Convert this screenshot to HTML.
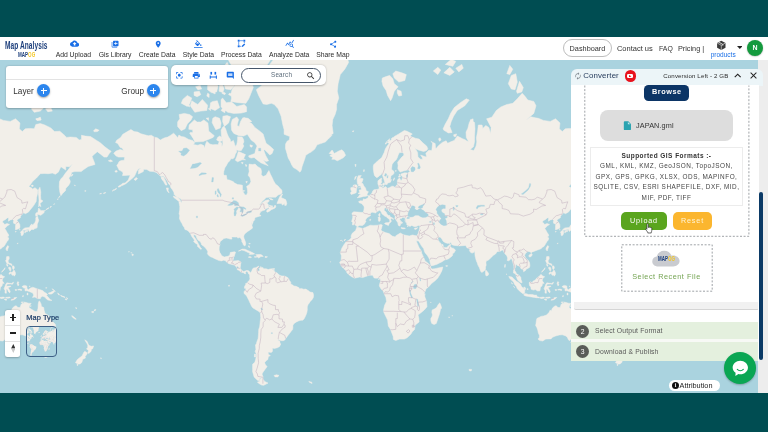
<!DOCTYPE html>
<html lang="en"><head><meta charset="utf-8"><title>Map Analysis - Converter</title>
<style>
*{box-sizing:border-box;margin:0;padding:0}
html,body{width:768px;height:432px;overflow:hidden;background:#004d52;font-family:"Liberation Sans",sans-serif;color:#222}
#stage{position:absolute;left:0;top:0;width:768px;height:432px;overflow:hidden;background:#004d52}
#nav{position:absolute;left:0;top:37.400px;width:768px;height:22.400px;background:#fff}
#map{position:absolute;left:0;top:59.700px;width:758px;height:333.300px;background:#aad3df;overflow:hidden}
#map>svg{position:absolute;left:0;top:-59.700px;filter:blur(.3px)}
#track{position:absolute;left:758px;top:59.7px;width:10px;height:333.3px;background:#ededed}
.abs{position:absolute}

.t{position:absolute;white-space:nowrap;line-height:1}
#stage{will-change:transform}
.c{transform:translateX(-50%)}
.mi{position:absolute;top:51.700px;font-size:6.8px;color:#2b2b2b;white-space:nowrap;line-height:1;transform:translateX(-50%)}
.ic{position:absolute;fill:#1a6fe6}
.rn{position:absolute;top:44.6px;font-size:7.3px;color:#333;white-space:nowrap;line-height:1}
.card{position:absolute;background:#fff;border-radius:3px;box-shadow:0 0.5px 2px rgba(0,0,0,.25)}
.plus{position:absolute;width:13px;height:13px;border-radius:50%;background:#2c86ee;box-shadow:0 1px 2px rgba(0,0,0,.35)}
.plus:before{content:"";position:absolute;left:3.4px;top:5.95px;width:6.2px;height:1.1px;background:#fff}
.plus:after{content:"";position:absolute;left:5.95px;top:3.4px;width:1.1px;height:6.2px;background:#fff}
.fmt{position:absolute;left:590px;top:147px;width:153px;height:58.5px;border:0.6px solid #ececec;text-align:center;font-size:6.4px;letter-spacing:.5px;color:#454545;line-height:10.5px;padding-top:2.9px;white-space:nowrap}
.fmt b{color:#333;letter-spacing:.45px;font-size:6.5px}
.btn{position:absolute;border-radius:5px;color:#fff;font-size:7.2px;letter-spacing:.85px;text-align:center;line-height:17px;height:17.5px;top:212px}
.step{position:absolute;left:570.5px;width:187.5px;background:#e4f0de}
.step i{position:absolute;left:5.7px;width:13px;height:13px;border-radius:50%;background:#595c58;color:#fff;font-style:normal;font-size:6.8px;text-align:center;line-height:13px}
.step span{position:absolute;left:24.5px;font-size:6.8px;color:#5a5a5a;letter-spacing:.15px;line-height:1}
</style></head><body>
<div id="stage">
<div id="nav"></div>
<div class="t" style="left:5.2px;top:40.500px;font-size:10.2px;font-weight:bold;color:#1d3f7c;transform:scaleX(.645);transform-origin:0 0;letter-spacing:.1px">Map Analysis</div>
<div class="t" style="left:17.6px;top:51.500px;font-size:6.700px;font-weight:bold;color:#1d3f7c;transform:scaleX(.68);transform-origin:0 0">MAP<span style="color:#f3c623">OG</span></div>
<svg class="ic" style="left:69.500px;top:39.300px" width="9.200" height="9.200" viewBox="0 0 24 24"><path d="M19.35 10.04C18.67 6.59 15.64 4 12 4 9.11 4 6.6 5.64 5.35 8.04 2.34 8.36 0 10.91 0 14c0 3.31 2.69 6 6 6h13c2.76 0 5-2.24 5-5 0-2.64-2.05-4.78-4.65-4.96zM14 13v4h-4v-4H7l5-5 5 5h-3z"/></svg>
<div class="mi" style="left:73.4px">Add Upload</div>
<svg class="ic" style="left:111.4px;top:40px" width="8.2" height="8.2" viewBox="0 0 24 24"><path d="M4 6H2v14c0 1.100.9 2 2 2h14v-2H4V6zm16-4H8c-1.100 0-2 .9-2 2v12c0 1.100.9 2 2 2h12c1.100 0 2-.9 2-2V4c0-1.100-.9-2-2-2zm-1 9h-4v4h-2v-4H9V9h4V5h2v4h4v2z"/></svg>
<div class="mi" style="left:115.1px">Gis Library</div>
<svg class="ic" style="left:154px;top:39.8px" width="8.4" height="8.4" viewBox="0 0 24 24"><path d="M12 2C8.13 2 5 5.13 5 9c0 5.250 7 13 7 13s7-7.750 7-13c0-3.870-3.130-7-7-7zm0 9.500c-1.380 0-2.500-1.120-2.500-2.500s1.120-2.500 2.500-2.500 2.500 1.120 2.500 2.500-1.120 2.500-2.500 2.500z"/></svg>
<div class="mi" style="left:157.1px">Create Data</div>
<svg class="ic" style="left:194.3px;top:39.6px" width="8.6" height="8.6" viewBox="0 0 24 24"><path d="M16.560 8.940L7.620 0 6.210 1.410l2.380 2.380-5.150 5.150c-.59.59-.59 1.540 0 2.120l5.500 5.500c.29.29.68.44 1.060.44s.77-.15 1.060-.44l5.500-5.500c.59-.58.59-1.530 0-2.120zM5.210 10L10 5.210 14.790 10H5.210zM19 11.500s-2 2.170-2 3.500c0 1.100.9 2 2 2s2-.9 2-2c0-1.330-2-3.500-2-3.500zM0 20h24v3.500H0z"/></svg>
<div class="mi" style="left:198.4px">Style Data</div>
<svg class="ic" style="left:237.400px;top:39.400px;fill:none;stroke:#1a6fe6;stroke-width:1.700" width="9" height="9" viewBox="0 0 24 24"><path d="M4.500 7V17M7 4.500H17M19.500 7V11M7 19.500H11"/><g fill="#1a6fe6" stroke="none"><rect x="2" y="2" width="5" height="5"/><rect x="17" y="2" width="5" height="5"/><rect x="2" y="17" width="5" height="5"/><path d="M12.500 21.500l.6-3.200 6.200-6.200 2.600 2.600-6.200 6.200z"/></g></svg>
<div class="mi" style="left:241.4px">Process Data</div>
<svg class="ic" style="left:284.900px;top:39.300px" width="9.400" height="9.400" viewBox="0 0 24 24"><path d="M19.880 18.470c.44-.7.7-1.510.7-2.390 0-2.490-2.010-4.500-4.500-4.500s-4.500 2.010-4.500 4.500 2.010 4.500 4.490 4.500c.88 0 1.700-.26 2.390-.7L21.580 23 23 21.580l-3.120-3.110zm-3.800.11c-1.380 0-2.500-1.120-2.500-2.500s1.120-2.500 2.500-2.500 2.500 1.120 2.500 2.500-1.120 2.500-2.500 2.500zm-.36-8.500c-.74.020-1.450.18-2.100.45l-.55-.83-3.800 6.180-3.010-3.520-3.630 5.810L1 17l5-8 3 3.500L13 6l2.720 4.080zm2.590.5c-.64-.28-1.330-.45-2.050-.49L21.380 2 23 3.180l-4.690 7.400z"/></svg>
<div class="mi" style="left:289.2px">Analyze Data</div>
<svg class="ic" style="left:329.2px;top:39.6px" width="8.4" height="8.4" viewBox="0 0 24 24"><path d="M18 16.080c-.76 0-1.440.3-1.960.77L8.910 12.700c.05-.23.090-.46.090-.7s-.040-.47-.090-.7l7.050-4.110c.54.5 1.250.81 2.040.81 1.660 0 3-1.340 3-3s-1.340-3-3-3-3 1.340-3 3c0 .24.040.47.090.7L8.040 9.810C7.500 9.310 6.790 9 6 9c-1.660 0-3 1.340-3 3s1.340 3 3 3c.79 0 1.500-.31 2.040-.81l7.120 4.160c-.5.21-.8.43-.8.650 0 1.610 1.310 2.920 2.920 2.920 1.610 0 2.920-1.310 2.920-2.920s-1.310-2.920-2.920-2.920z"/></svg>
<div class="mi" style="left:332.9px">Share Map</div>
<div class="abs" style="left:563px;top:39.4px;width:48.6px;height:17.4px;border:0.7px solid #bdbdbd;border-radius:9px"></div>
<div class="rn" style="left:569.6px">Dashboard</div>
<div class="rn" style="left:616.9px;font-size:7.5px">Contact us</div>
<div class="rn" style="left:659px;font-size:6.9px;top:45.700px">FAQ</div>
<div class="rn" style="left:677.9px">Pricing |</div>
<svg class="abs" style="left:715.600px;top:39.700px" width="10.600" height="10.600" viewBox="0 0 24 24"><path fill="#3a3a3a" d="M12 1.500L2.500 6.700v10.600L12 22.500l9.500-5.200V6.700z"/><path fill="none" stroke="#e8e8e8" stroke-width="1.400" d="M2.500 6.700L12 12l9.500-5.300M12 12v10.500"/><path fill="#d9d9d9" d="M7 4.200l9.500 5.300v3.200l-1.800 1V10.600L5.200 5.200z"/></svg>
<div class="t c" style="left:723.2px;top:51.600px;font-size:6.500px;color:#1a6fe6">products</div>
<svg class="abs" style="left:736.6px;top:45.8px" width="5.6" height="3" viewBox="0 0 10 5"><path d="M0 0h10L5 5z" fill="#222"/></svg>
<div class="abs" style="left:746.6px;top:39.6px;width:16.8px;height:16.8px;border-radius:50%;background:#149a3e;color:#fff;font-size:7px;font-weight:bold;text-align:center;line-height:16.8px;box-shadow:0 .5px 1.500px rgba(0,0,0,.3)">N</div>

<div id="map">
<svg width="768" height="432" viewBox="0 0 768 432">
<defs><g id="world">
<path fill="#f2efe9" stroke="#f2efe9" stroke-width="0.5" stroke-linejoin="round" d="M113.7 153.2L116.1 151L120.1 149.5L123.6 150.6L122.1 147.9L120.3 147.6L117.7 143.6L115.6 142.6L116.5 140.4L120.6 137.4L122.8 134.3L126.6 132.1L130.9 129.5L134.1 131.6L137.8 132.1L140.8 133.7L144.6 134.8L148.3 135.7L151.3 135.2L154.3 137.2L157.3 137.8L160.3 140.1L162.6 138.7L164.8 137.8L167.8 137L170.8 135.2L173.5 133.2L175.3 134.8L177.6 137.8L178.9 135L181.3 136.5L184.3 137L188.8 139.5L192.6 140.4L194.8 142.8L193.3 144.6L197.8 145.2L200.8 144.2L203.8 145.6L204.6 148.3L205.3 144.8L206.8 141.2L209.8 144L212.8 144.8L215.8 144.6L218.1 144.8L218.8 142.4L219.6 141.8L221.8 143L221.8 146.8L222.9 144L222.6 140.4L221.4 135.7L221.1 130.2L223 126.7L224.1 126.4L225.6 128.8L227.1 133.4L228.6 137L230.1 139.1L230.8 142L233.4 140.4L235.3 146.4L236.8 144.4L237.6 139.9L237.6 136.7L242.1 137L243.6 139.5L243.9 142L242.8 144L243.9 146L241.3 150.6L239.1 150.8L236.5 149.8L236.8 151.7L235.3 154.3L234.6 157.1L233.1 158.8L230.8 158.8L229.8 160.8L227.8 162.8L226.3 165.7L224.8 167.9L223.8 171.6L223.6 174.6L224.5 175.3L226.3 175.3L227.1 179.7L229.3 180L233.1 181.6L234.6 183L237.6 184.5L241.3 184.9L242.4 185.2L242.5 188.2L242.5 190.7L243.6 192.7L245.1 194.9L246.6 194.9L247.6 192.4L247.3 188.7L246.6 186.4L249.6 184.3L250.9 181.6L250 177.7L248.1 175.2L249.2 171.6L248.8 167.9L249.1 164.1L252.6 164.5L255.1 164.1L257.8 166.7L260.8 168.4L261.6 171.6L261.2 174.6L263.1 176.6L266.1 175.2L267.6 172.5L268.9 170.6L270.6 174.6L272.1 177.4L273.6 180.8L275.4 184L278.1 186.1L279.6 187.9L281.8 190L282.1 192.4L281.1 194.1L278.1 195.1L275.8 197.2L272.8 197.2L269.1 197.2L266.1 197.5L264.6 199.3L262.3 201.2L260.1 204.3L259 205.1L260.8 204.7L262.3 202.7L265.3 200.5L268.3 199.8L269.4 200.7L267.9 202.5L266.4 202.4L268.3 204.5L268.6 206.5L269.8 206.9L271.3 207.3L273.6 207.6L275.1 205L276 206.9L274.3 208.4L271.3 209.7L269.1 211.4L267.2 212.2L266.5 211.2L267.1 209.9L269.1 208.6L268.6 207.6L266.8 208.6L265.3 209.1L265 209.9L263.1 210.5L260.8 211.6L259.9 213.2L259.6 214.2L259.9 215.3L260.8 215.3L260.8 215.9L259.3 216.3L257.8 216.7L255.2 217.5L254.8 218.1L254.8 219.6L253.6 221.2L252.6 220.4L253.2 221.9L252.4 223.9L251.8 225L251.4 223.1L251.2 220.8L251.1 224L251.9 225.2L252.6 228.1L251.1 229.2L248.9 230.7L247.3 231.8L245.8 233L244.3 234.4L243.7 236.4L244 238.3L244.9 240.3L245.7 242.9L245.5 245.2L244.9 245.8L244.2 245.8L243.2 244.6L242.8 243.2L241.8 241.7L241.8 240.2L240.9 238.5L239.8 237.5L237.9 238.1L236.8 237.1L234.6 237.1L232.4 236.9L231.6 237.4L232 239.1L230.1 239.1L228.6 238.5L226.3 238L223.8 238.6L222.6 239.8L220.3 241.4L219.7 243.6L220 244.6L219.2 246.9L219.1 250.1L219.9 252.6L221.1 254.5L221.8 255.8L223.3 256.4L224.4 257L226.3 256.6L228.1 256.3L229.3 255.4L230.1 254.2L230.2 252.6L232.3 252.1L234.6 251.8L235.6 252.2L234.9 254.2L234.2 256.6L233.5 257.3L233.5 258.9L232.6 260.6L233.8 260.9L236.1 260.8L238.3 260.6L240.7 261.7L241.1 262L240.6 264.4L240.4 266.2L240.2 268.2L241.3 269.7L242.5 270.9L243.6 271.5L245.1 271.1L246.4 270.5L248.1 270.6L249.7 271.8L248.9 274L248.2 272.8L247.3 271.4L246.6 271.3L245.4 272.3L245.8 273.5L245.2 273.9L244.3 273.4L243.2 272.6L241.6 272.5L240.6 272L240.2 271.2L238.8 270.3L237.2 269.7L237.2 268L235.8 266.4L234.6 265.1L233.1 264.8L231.1 264.3L228.9 263.7L227.4 262.7L225.1 260.6L223.6 260.2L221.5 260.9L219.1 260.6L216.6 259.5L214.3 258.4L212.5 257.4L210.4 256.7L208.3 255.1L207.4 253.5L207.9 251.8L206.8 249.7L205.3 247.7L203.1 245.7L201.7 244.9L201.1 243L199.9 241.2L198.1 240.2L196.6 237.8L196 235.5L193.6 234.4L193.8 236.4L195.4 238.6L196.8 240.7L198.2 243.4L199.6 246.1L200.4 247.4L201.6 248.8L200.8 249.5L199.4 248L197.5 246.4L197.5 244.4L195.4 243.2L193.6 241.4L194.5 240.2L193.3 238.5L191.8 236.5L190.8 234.4L190 233L188.2 230.9L186.6 230L184.9 229.5L184.3 227.6L182.8 225.5L182.1 223.7L181.3 222.5L180.1 220.2L179.4 218.4L179.7 215.7L179.1 213.6L179.7 210.1L179.8 206.5L178.8 201.6L181.3 202.1L182.1 203.6L181.6 200.2L180.9 199.1L178.6 197.7L176.1 196.5L174.2 194.6L173.9 192.4L172.6 190L170.8 187.7L170.3 185.6L168.6 184L167.5 181.3L165.3 178L163.3 176L161.1 176.6L158.8 174.6L156.3 172.5L153.6 171.6L149.8 171.3L146.8 169.5L143.8 169.2L143.3 171.6L141.6 172.5L138.3 174L138.6 170.1L140.8 167.9L138.3 168.9L136.6 171.6L135.6 173.7L134.5 176.3L131.8 178.8L128.8 181.3L125.8 183.8L122.8 185.3L120.6 186.1L118.6 186.6L121.3 184.5L122.8 183.2L125.1 183L128.1 180.2L129.6 176.6L130.3 175.2L128.1 175.2L125.1 175.4L122.5 175.6L123.1 173.1L122.1 171.6L119.1 170.1L117.6 167L116.8 165.4L118.3 163.2L119.1 161.5L121.3 160.5L124.3 160.2L124.6 157.1L122.1 157.1L118.3 157.1L116.1 156ZM300 172.2L296.8 169.5L293.4 167.6L291.6 164.8L290.1 161.2L288.2 158.1L287.1 153.9L285.4 148.3L285.6 144L287.1 141.2L289.3 139.9L289.8 136.5L284.1 134.3L284.1 129.8L282.6 124L281.1 116.2L278.1 108.8L274.3 104.5L271.3 103.3L266.8 104.5L263.1 103.9L258.6 95.4L256.3 89.7L263.8 83.7L268.3 79.6L268.3 75.4L264.6 71.9L269.8 64.4L275.1 57.2L283.3 52.9L290.8 51.7L298.3 47.1L305.8 40.9L316.3 36.9L325.3 42.2L332.8 48.3L335.8 56.2L347.8 59.3L348.6 62.4L344.8 69.2L340.3 74.6L338.1 83.7L337.3 91.2L338.8 98.1L336.6 104.5L336.6 109.4L335.1 114.5L332.8 119.4L332.1 125.5L333.2 133.4L329.8 135.7L332.1 135.2L328.3 139.1L325.3 142L320.8 143.6L317.1 144.8L314.8 149.1L311.1 152.1L308.8 153.2L305.8 155.3L304.8 158.8L303.6 162.2L302.1 166.4L301.3 170.1ZM329.1 153.5L332.1 150L334.3 153.5L338.8 151L341.8 149.8L343.9 151.7L345.6 155.3L343.3 157.8L339.6 159.7L337.3 160.8L334.3 159.3L331.8 159.3L332.8 157.4L329.8 155.7L332.5 154.3ZM249.7 271.8L250.6 272.8L251.8 270.8L252.6 268.8L253.6 268L255.6 267.7L257.5 266.8L258.4 266L258.9 267L257.9 267.9L258.4 268.4L259.3 268.2L260.5 267.4L260.8 266.4L261.2 267.4L263.1 267.7L263.5 268.8L266.1 268.8L268.3 269.6L269.8 269L272.8 268.7L271.8 269.1L273.1 270L274.6 270.8L274.5 271.9L276.1 272.3L278.1 273.8L279.6 275.3L281.8 275.9L284.8 276.1L287.1 277.3L288.6 278.3L289.3 280.3L290.8 282.2L290.8 284L293.1 285.3L293.8 285.9L296.1 286.3L299.1 287.8L299.4 288.9L301.3 288.4L303.6 289.2L305.8 289.1L308.1 290.4L310 292L312.9 292.6L313.5 294.6L313.6 295.6L313.3 297.6L312.2 299.4L310.3 301.4L308.8 303.7L308.1 304.5L307.3 306.8L307.3 309.9L306.9 312.3L306.1 314.8L305.4 316.2L304.3 318.6L302.8 320.2L301 320.3L298.9 320.8L296.4 321.9L294.1 323.5L292.9 325.2L292.9 327.7L292.6 329.6L290.8 331.7L289.3 333.8L287.6 335.9L285.7 338.5L284.8 340L283.3 340.7L281.5 340.7L279.1 339.9L278.2 339.1L278.2 340.2L279.9 341.3L280 343.1L280.8 343.9L279.6 346.5L277.3 347.8L274.3 348.4L272.4 348L272.5 351.3L271.3 352.5L268.3 352.1L268.3 354.3L270.4 355.6L268.3 356.8L267.9 359.5L266.1 360.8L264.6 362.7L265.6 364.9L267.1 366.6L264.6 370L263.1 372.1L262 374L263.2 377.3L261.6 377.7L259.6 378.4L259.4 380.4L257.8 380.4L255.6 378.6L254.1 376.9L253.3 374L252.6 371.7L252.6 369.4L252.6 366L252.6 364.2L254.8 362.3L255.6 359.5L256.3 356.4L256.3 353.9L255.1 351.3L255.9 349.4L255.6 346.5L255.4 345L256.3 343.9L256.9 341.8L258.1 338.4L258.4 335.5L258.6 332.4L258.7 329.4L259.6 326.9L259.9 324.4L260.2 321.1L260.7 317.8L260.5 315.4L260.4 312.9L258.9 311.6L257.1 310.4L254.8 309.1L253 308L251.4 306L250.6 303.9L250 302.9L248.8 300.3L247.9 298.4L246.9 296.5L245.9 295L244.3 293.8L244 292.6L243.9 291.9L245.1 290.2L245.8 289.8L246.1 288.4L244.4 288.3L244.6 286.3L245.7 284.8L245.7 283.5L247.3 283L247.6 282.1L248.8 280.9L249.6 279.7L249.9 278.8L249.6 276.5L249.7 275L248.9 274ZM262.9 377.9L263.4 379.6L264.6 381.4L268 383.1L266.1 384.1L263.8 385.3L261.6 385.1L259.3 383.7L257.4 382.2L259.3 381.4L260.4 378.9L261.6 378.1ZM254.5 354.1L255.6 354.3L255.6 357L254.4 357ZM274 375.5L276.6 374.7L279.1 375.5L277.6 376.9L275.1 376.9ZM339.6 262.5L340.8 264.7L341.1 265.9L343.3 268.2L345.9 270.5L347.1 273.1L348.6 274.4L351.6 276.7L354.6 278.2L359.8 277L362.8 277.6L367.3 275.9L369.9 275.2L372.6 275.3L374.1 278L376.3 278.2L378.6 278L380.4 278.9L380.5 281.3L379.8 283.3L379.3 285.9L380.8 288.6L383.5 291.7L384.1 293.8L385.9 297.6L386.5 301.4L384.6 305.2L383.5 309.9L383.8 312.3L386.1 317L387.6 320.1L388.3 326L390.6 329.6L391.8 332.9L393.2 336.4L393.4 339.4L395.8 340.5L399.6 339.1L404.4 339.1L407.1 337.8L410.8 334.3L412.3 331.8L414.6 329.4L415.1 325.2L419.1 321.9L418.8 317.8L418 315.1L420.6 313L424.3 309.9L427 306.8L426.6 301.4L424.8 296.8L424.8 295L424 293.5L425.1 291.6L426.1 288.7L428.1 287.4L431.8 283.3L434.8 281L437.8 278L440.1 274.3L442 270.5L442.8 267L439.3 267.7L434.8 268.7L431.8 269.1L430.6 267.3L430.6 265.9L427.6 262.8L425.1 260.9L423.6 257.3L421.8 253.4L421.3 251L419.2 247.7L417.1 243L416.1 241L414.7 237.8L414.2 235.3L412.3 235L409.3 236L403.6 234.8L400.3 233L395.8 235.8L395.5 237.1L392.1 236L389.1 233.6L385.3 232.5L382.3 231.2L380.9 230L381.7 227.8L382.3 225L380.8 224.4L377.8 225.2L373.3 225.4L370.3 225.2L365.8 227.2L362.8 228.5L357.9 227.2L356.8 227.2L355.6 230.5L352.3 233.2L351.1 235.8L351.2 237.9L349 240.2L346.3 241.5L344.1 244.4L341.8 248.2L340.3 252.6L341.4 255.8L341.1 260.5ZM439.8 302.9L441.1 306L441.6 308.3L440.5 309.1L440.1 311.5L439.3 314.6L438.2 317.8L437.1 321.1L436.3 323.5L434.1 324.5L431.8 323.5L430.9 321.1L430.8 318.6L432.2 316.2L432.4 314.6L431.8 312.3L432.2 309.9L434.8 308.8L436.8 307.3L437.8 305.2L439 303.5ZM357.4 226.9L356.4 225.9L354.7 224.6L352.4 225L352.6 222.3L351.6 221.6L352.4 218.8L352.8 216.9L352.4 215.1L351.9 213.2L353.8 211.8L357.1 212L360.1 212.3L363.1 212.5L363.9 210.1L364.2 207.8L364 206.5L362.5 204.5L361.3 203.4L359.2 202.8L358.6 201.6L360.6 200.7L362.8 201L363.4 198.8L364 199.3L365.9 199.1L368.1 197.7L368.2 195.8L370.6 194.7L371.8 193.2L372.9 190.7L374.1 189.7L376.3 189.5L378.1 189.2L379.2 188.2L378.7 185.9L377.9 184L377.9 181.1L378.7 180L380.7 178.6L381.7 178.1L381.6 179.7L381.2 181.3L382.2 181.9L381.1 182.7L380.5 184.3L380.1 185.6L380.8 186.9L382.3 187.2L382.2 188.2L383.8 187.8L384.6 187L385.9 186.6L387.1 188.4L389.8 187.5L391.3 186.4L393.4 186.1L393.9 187.2L395.2 187L395.8 185.9L397.3 184.8L397.4 183L397.3 180.8L398.1 179.1L399.7 178.1L400.6 180.2L401.8 180.2L402.4 178L402.4 176.3L401.1 175.4L400.9 174L402.9 173.3L404.8 172.8L407.8 173.1L410.1 171.6L411.1 171.8L409.3 171L408.6 169.8L406.3 170.3L403.3 171L400.3 172.1L398.8 170.4L397.8 168.6L398.1 165.4L397.6 162.2L399.6 159.8L401.8 157.1L403.8 155.3L403.8 153.5L402.1 152.4L399.2 152.8L398.1 155.3L397.3 157.8L396.2 159.8L394 161.8L392.1 164.5L391.6 168.6L391.8 169.8L393.7 171L394.2 173.1L393.1 174.6L391 175.7L390.6 178.8L390.4 181.3L389.5 182.7L387.6 183L387.2 184.4L385.3 184.5L385 183L384.7 181.9L383.8 179.1L382.6 175.7L382.3 174.3L381.7 172.5L381.2 174.6L379.8 175.4L377.8 177.2L376.3 177.4L374.4 175.4L373.6 171.6L373.3 169.2L373.3 166.4L373.6 164.8L375.6 162.8L377.1 161.5L379 159.8L381.6 157.8L382.8 155.3L384.2 152.4L385.3 149.1L386.8 146.4L389.1 143.6L387.6 142.4L385.3 144L387.6 140.8L390.6 140.4L392.5 138.2L394.3 136.5L396.6 135.2L398.8 133.9L401.1 132.5L404.4 130.5L407.1 131.2L408.6 132.1L412.3 133.9L410.1 136.1L412.3 137L415.3 138.2L419.1 139.1L422.8 142.8L426.6 146L427.8 148.7L426.6 150.6L423.6 151.5L419.1 150.2L416.1 149.1L414.6 147.6L417.6 152.4L418 157.1L420.6 159.2L422.8 159.2L422.1 157.4L420.6 155L425.4 156.7L426.6 156.7L425.8 153.2L428.8 150.2L431.8 150.6L432.6 142.8L430.8 141.4L435.2 143.6L435.6 148.3L436.3 148.3L438.6 145.6L442.3 142.4L446.1 140.8L447.6 143.2L451.3 141.6L454.3 140.4L456.6 137L457.3 136.1L462.6 138.7L465.6 139.9L466.3 140.8L468.6 141.6L466.3 137.4L466 132.1L467.8 128.4L469.3 122.5L470.8 119.9L474.6 122.5L475 128.8L474.6 135.7L474.6 141.2L473.5 146.8L470.1 149.5L473.8 150.6L476.1 146L476.8 142L476.4 137.8L477.6 131.2L478.3 125L482.1 125L482.8 128.4L485.8 125.5L488.8 127.4L490.6 133.4L491.1 127.4L486.6 118.8L491.8 117.2L496.3 110.5L500.8 107L506.8 104.5L512.8 103.3L517.3 98.8L522.2 93.3L524.8 96.1L527.8 100.1L533.8 101.4L536 105.8L533.8 113.4L529.3 117.2L525.5 120.4L530.8 116.7L535.3 117.8L538.3 118.3L543.5 120.4L550.3 121.4L555.5 118.8L560 123L559.3 128.8L562.3 131.6L565.3 128.8L569.8 128.4L574.3 128.8L575.8 124.5L580.3 123.5L584.8 125L590.8 127.9L594.5 131.6L599.8 131.2L605 135.7L606.5 137.4L610.3 137L616.3 137.4L619.3 139.9L621.5 139.5L621.5 135.2L625.3 136.1L630.5 136.5L635.8 139.9L640.3 142.8L644.8 146.8L648.5 149.5L651.2 151.3L649.3 153.5L647 157.1L644 157.1L640.3 153.9L637.3 151.7L634.3 154.3L632 156.4L634.3 162.2L635 164.5L628.3 166.4L623.8 169.5L621.2 171.6L614.8 171.6L611.8 172.2L610.6 176L608.8 178L610.3 181.1L610 183L608.5 185.6L605.8 188.2L605.5 190.7L602.8 193.2L600.9 195.8L599.8 191.9L599.2 186.9L599.5 181.6L601 178.8L602.8 176.9L605.5 173.1L608 170.1L611 166.1L612.5 163.8L609.5 166.7L605.8 166.4L605.8 170.1L600.9 166.7L598.3 172.2L595.3 174.3L592.3 173.1L588.5 173.7L584 173.5L580.3 173.7L576.5 178L572.8 181.3L569.8 185.6L568.8 186.6L572 188.2L572.4 189.2L575 187.7L577.8 190L577.6 193.2L576.5 197.9L576.2 201.4L573.5 205.8L570.5 209.5L568.3 212.2L565.3 213.7L563.8 212.8L561.9 214.4L560.5 216.3L560.4 217.7L557.8 219.2L557 220.6L558.4 222.1L559.8 224.6L560 226.9L559.6 228.3L557.5 229.2L555.4 229.8L555.5 227.8L555.5 225.4L555.9 223.9L553.8 223.5L553.3 221.9L553.8 220.2L552.4 219.4L550.3 220L548.4 221.2L548.5 219.2L548.7 217.7L547.3 217.9L545.5 219.4L542.8 221L542.4 222.1L544 223.5L544.6 224.6L547 223.5L549.5 224.4L547.3 225.9L546.2 226.9L544.8 228.7L545.8 230L547 232.3L548.5 234.4L548.7 236L547.3 237.1L548.8 237.9L548.2 240.2L547 241.4L545.5 244.1L544 246.4L542.8 247L540.9 248.8L537.5 250L536.2 250.5L533.8 251.4L531.5 252.2L531.4 253.7L530.5 251.9L528.5 251.4L527 251.9L525.9 253.1L524.5 255.3L525.5 257.7L527 259.4L528.4 260.5L529.6 262.8L529.9 265.4L529.6 267.3L527.8 268.4L526.3 269.1L525.5 270.5L523.6 271.7L523.3 270L522.9 269.3L521 268.8L520.2 267L518.8 265.9L517.2 265.4L516.7 264.4L515.8 264.7L515.7 266.7L514.8 268.5L514.8 270.8L515.8 272L516.5 273.8L518 274.6L519.5 275.8L520.9 277.6L521 279.5L521.8 281.5L522.1 282.7L521 282.8L519.5 281.8L518 280.6L517.2 278.9L516.4 276.8L516.1 275L515 273.5L513.4 272.9L513.5 270.5L513.9 268.2L513.9 265.9L513.2 263.6L512.4 261.3L512.2 259.7L511 258.6L510.1 259.7L508.8 260.8L507.2 260.5L507.6 258.1L506.8 255.8L505.3 254.2L503.8 252.1L503.5 250.5L502 250.1L500.8 251.1L499.3 251.4L497.8 251.4L496.6 252.2L496 253.4L495.2 254.3L493.3 255.3L491.8 256.9L490.8 257.8L489.2 259.5L487.6 260.5L486.2 261.1L485.9 262.8L486.2 265L485.5 267L485.5 269.3L484.4 270.8L483.1 271.5L482.1 272.6L480.7 271.4L480.1 269.7L479.4 267.7L478 265.3L477.2 262.8L476.5 261.3L475.8 258.9L475 255.8L474.9 253.4L474.7 251.8L474.6 250.6L473.9 252.2L472.3 253.1L470.8 252.6L469.3 250.6L471.2 249.5L469.3 249.3L468.1 248.2L466.9 247.7L466.2 246.4L465.6 245.4L462.6 245.7L459.2 245.9L457.3 245.7L454.3 245.4L451.8 244.7L451.1 242.7L450.2 242.5L447.9 243.4L445.3 242.7L443.1 241.2L442 239.3L440.8 237.6L439.3 236.9L438.6 237.6L437.8 238.5L438.4 240.2L439.3 241.9L440.8 243.2L441.1 244.9L442 246.1L442.1 245.1L442.6 244.1L443.2 245.2L443.1 246.7L444.6 247.4L446.8 247.4L448.8 245.6L450 244.4L450.4 243.8L450.4 246.1L451.3 247.7L453.7 248.4L455.5 250.1L454.3 252.6L452.8 253.5L452.4 255.8L450.6 257.3L448.3 258.9L444.6 260L441.6 262L439.3 263.1L437.1 264.2L433.3 265.4L431.1 265.7L430.6 264.4L430 262L429.7 259.7L428.5 257.3L427 255L425.2 252.9L424.5 251.8L423.6 248.5L421.6 246.1L420.1 243.6L418.6 241L417.7 240.9L418.3 238.5L417.1 241.4L415.6 240L414.7 237.8L414.4 235.5L416.5 235.7L417.2 235.3L418 233.7L418.5 232.1L419.2 230L419.6 227.8L420 225.7L418.3 225.5L416.8 226.3L414.6 226.7L411.7 225.4L410.1 226.5L408.1 225.4L406.9 225L406.6 223.1L405.6 222.1L406 220.6L405.1 219.4L405.9 218.4L407.1 218.4L409.3 218.4L409.6 217.7L409.1 217.3L407.1 217.4L405.9 218.3L405.1 219L405.1 217.9L404.1 217.6L402.4 217.5L401.5 218.6L400.3 218.4L399.7 219.2L400.6 220.8L400.1 221.6L401.8 222.7L401.8 223.7L400.6 223.3L400.6 224.4L400 225.9L399.4 226L398.4 225.4L397.8 223.7L398.4 222.7L397.3 222.3L396.9 221.2L395.9 220L394.9 218.4L395.1 216.3L394.8 215.3L393.6 214.4L392.1 213.2L390.4 212.2L388.6 210.7L388.2 209.1L387.2 208.4L386.7 209.4L386.4 207.6L384.4 208.2L384.2 210.5L386.1 212L387.1 214.2L388.6 215.5L389.9 215.5L389.8 216.5L391.3 217.3L392.8 218.1L393.6 219L393.2 219.6L392.7 218.8L391.3 218.3L390.7 219.4L391.4 221.2L390.6 222.3L389.8 223.2L389.3 223.1L389.4 221.9L389.9 221.2L389.4 219.2L388.2 218.6L387.4 217.9L386.4 216.8L384.6 216.1L383.5 215.1L382.3 214.2L381.6 213.2L381.2 212L380.5 210.9L379.2 210.3L377.8 211.4L376.9 211.7L375.6 212.9L373.9 212.6L372.1 212.2L370.8 212.8L370.3 214.2L370.6 215.5L369.1 216.5L367 217.7L365.8 219.6L365.4 220.4L366.1 221.7L365.1 222.5L364.6 223.9L362.9 225.2L362.5 225.5L360.6 225.5L359.2 225.5L357.9 226.6ZM357.2 197.8L360.6 197.2L363.6 196.4L366.2 196.2L367.9 195.2L366.9 194.4L368.4 191.7L366.2 190.7L365.9 189.2L365.5 187.9L363.9 186.1L362.8 183.5L361.3 183L362.1 181.9L362.8 180L363.1 178.8L360.6 178.3L359.5 178.8L361 176L361.3 175.6L358.3 175.7L357.1 178.8L357.2 181.6L357.6 184.3L358.6 184.3L358.3 186.1L360.6 185.9L360.7 187.4L361.3 188.7L361.3 189.7L359.1 190L359.4 191.2L359.7 192.4L358 193.4L359.5 194.1L361.3 194.6L359.5 195.1L358.3 196.8ZM356.5 190L356.2 192.7L353.8 193.7L351.1 194.4L350.4 192.9L351.6 191.5L350.8 189.5L350.8 187.7L353.1 187.2L353.2 185.3L354.9 184.7L356.8 185.1L357.4 186.6L356.8 188.2ZM382.3 78L386.8 76.3L389.8 75.4L392.8 78.8L394.3 83.7L398.1 86.7L394.3 91.2L392.1 98.1L390.6 100.7L387.6 95.4L386.1 90.5L383.1 86L381.9 81.3ZM392.8 73.7L395.8 71L401.8 72.8L406.3 74.6L404.8 80.5L398.8 82.1L394.3 78ZM397.3 89.7L401.1 91.2L401.8 95.4L398.8 96.1L397.3 93.3ZM433.3 71L437.8 67.3L440.8 70.1L437.8 74.6ZM443.8 72.8L449.8 67.3L454.3 71.9L449.8 75.4ZM445.3 64.4L451.3 59.3L455.8 61.4L452.8 66.3ZM455.8 68.2L461.8 64.4L463.3 68.2L458.8 71.9ZM443.1 128.8L445.3 124L448.3 118.8L450.6 113.4L454.3 107.6L460.3 102.7L466.3 98.8L469.3 100.1L464.8 105.8L457.3 110.5L453.6 116.2L451.3 121.4L449.8 126.4L452.1 132.5L448.3 133L446.1 131.6L443.8 130.2ZM508.3 83.7L511.3 75.4L515.8 73.7L517.3 82.1L515 89.7L511.3 89ZM506.8 73.7L509.8 65.4L512.8 69.2L509.8 74.6ZM516.5 91.2L519.5 81.3L523.3 87.5L521.8 91.9L517.3 93.3ZM571.3 108.8L575.8 104.5L580.3 105.8L583.3 108.2L580.3 111.1L574.3 112.3ZM585.5 108.8L590.8 107.6L592.3 111.1L587.8 111.7ZM575.8 118.8L580.3 117.8L581 119.9L577.3 120.4ZM633.5 130.7L635.8 128.8L639.2 130.2L637.3 131.6L634.3 131.8ZM579.9 187.2L580.8 191.9L580.6 195.6L580.8 199.6L582.9 200.9L580 203.6L581 206.7L579.5 205.4L578.7 206.9L578.8 203.6L579 200.2L578.8 196.8L578.4 193.2L578.5 189.7ZM575.8 216.3L577.6 215.7L577.3 214.2L580.8 215.3L584.2 212.6L583.6 210.5L581 210.7L578.7 208L578.2 210.1L577.8 212.6L576.2 212.8L575.5 214.2ZM577.8 216.5L578 218.3L578.8 220.2L578 222.5L577.3 224L577.2 227.3L575.8 228.7L575.4 227.8L574 229.4L573.1 229.4L571.3 229.4L571 230.1L569.5 231.5L568.5 230L568.9 229.3L566.8 229.4L564.5 230.2L562.3 230.6L562.8 229.4L564.9 227.9L567.1 227.7L569.5 227.6L569.8 226.5L571 224.6L571.8 224L571.6 225.4L573.5 224.2L574.8 222.7L575.8 220.2L575.8 218.1L576.2 216.9ZM564.5 232.3L565.3 230.7L567.2 229.9L567.9 230.9L567.1 231.8L566 231.6L565.3 232.8ZM562.2 230.7L563.4 231.2L563.8 232.7L562.9 235.1L561.9 235.8L561.1 235.3L561.1 233.6L560.4 232.3L561.2 231.2ZM548 245.6L548.7 246.4L548 248.5L547.2 251L546.1 249.7L546.1 248L547.3 246.1ZM528.9 255.4L530 254.2L531.7 254L532.3 254.8L531.4 256.2L530 257L528.9 256.6ZM485.8 270L487.6 271.9L488.7 273.8L488.2 275.2L486.7 275.9L485.8 275.5L485.5 273.8L485.5 272ZM384.5 223.5L385.8 222.7L389.3 222.6L388.8 224.9L388.4 225.6L387.1 224.9L384.9 223.9ZM378 217.4L379.6 216.8L380.4 218.3L380.1 220.9L379.2 221.4L378.4 221.1L378.4 218.6ZM378.6 214.5L379.9 213.2L380.1 215.1L379.6 216.6L378.7 215.5ZM401.1 227.6L402.1 227.7L405.2 228.1L405.2 228.6L402.9 228.9L401.1 228.2ZM414.2 228.7L415.2 228L416.4 228L417.6 227.5L416.9 228.8L415.3 229.5L414.4 229.1ZM369.4 220L370.4 219.3L371 219.8L370.3 220.6ZM445.8 265.7L447.6 265.7L447.4 266.2L445.9 266.2ZM393.1 180.2L394.3 177.7L394.6 178.6L393.6 180.5ZM382.6 183.8L384.2 182.7L384.7 184L384.1 185.3L382.8 185.1ZM380.5 184.3L381.9 184.3L381.9 185.3L380.8 185.6ZM546.7 256.6L549.1 256.6L549.2 258.9L548.2 260.5L548.2 262.3L549.5 263.3L551.7 263.9L552 265.7L550.8 265L549.7 264.5L548.4 263.7L546.9 263.7L546.7 262.7L546.1 262.2L545.7 260.2L546.4 259.5L546.4 258ZM554 270L555.2 272L555.5 273.8L555.1 275.2L554 276.2L553.8 274.9L552.1 275.3L551.2 273.2L549.1 274.3L549 273.1L550.3 272L551.8 272.5L552.9 271.4ZM552.4 265.9L553.9 265.9L554.4 267.9L553.6 269.4L553 269.4L552.4 267.7ZM548.8 267L550.5 267.4L551 269.1L550.5 271.1L549.5 270.3L549.4 269L548.7 268.8ZM545 267.7L544.8 269.1L542.8 271.2L541.6 272.2L542 271.4L543.9 269.3ZM546.4 264.4L547.9 264.7L547.9 266.1L547.2 266.2ZM529.3 282.4L530.2 281.8L532.3 282.7L532.9 281.2L535.3 280L536.8 277.9L539 276.5L541 274.3L542.4 275.8L544.7 276.8L542.8 278.3L542.2 280.3L542.8 281.5L544.2 283.3L542.5 283.6L542 286L540.5 287.1L540.2 289.3L540 290.8L537.7 291L535.3 289.6L533.5 290.1L531.1 289.2L530.8 287.1L529.5 285.6L529.3 284ZM508.8 276.4L512 277L513.9 279.1L516.4 281.3L518 282.2L520.3 283.9L521.4 286.3L522.5 287.5L524.8 289.3L524.7 291.6L524.5 293.5L522.5 293.5L521 292.2L519.2 290.7L517.3 288.7L516.2 286.2L514.3 284L513.7 282.2L511.8 280.3L509.8 278.6ZM523.6 295L524.8 293.7L526.3 293.7L528.5 294.6L532.2 294.4L534.7 295.2L537.4 296.4L537.4 297.9L534.5 297.4L531.5 297L528.5 296.5L525.5 295.9ZM537.5 297L539.2 297L539 297.9L537.7 297.7ZM539.7 297.3L540.9 297.3L540.7 298.2L539.8 298.2ZM541 297.4L542.8 297L544.3 297.3L544.3 298.1L542.5 298.4L541 298.4ZM545.7 297.4L547.3 297.3L550 297L550.2 297.7L548 298.2L545.7 298.1ZM544.3 299.1L546.1 299L547 299.9L545.8 300.3L544.6 299.6ZM551 300.3L552.5 298.7L554.7 297.6L556.8 297.4L555.5 298.7L553.3 299.9ZM546.4 293.2L545 293.1L545 290.1L544 288.9L544.8 286.9L545.5 285.1L546 283.7L547 282.8L549.5 283.3L551.8 283.4L553.2 282.2L553.6 282.5L552.5 284.2L550.3 284L547.3 284.1L546.2 286.2L548.2 286.1L550.9 286L550.8 286.5L549.1 287.2L548 287.7L549.4 289.8L550.2 291.4L549.7 292.9L548.7 292L548.2 291L547.3 288.9L546.2 289.3L546.4 291.6ZM557 283.3L557.8 281.6L558.9 282.5L558.1 283.6L559 284.3L558.1 285.9L557.5 284.8L557.2 283.6ZM557.8 289.5L560 289L562 289.8L561.5 290.5L559.3 289.9L557.8 290.1ZM555 289.6L556.5 289.5L556.6 290.4L555.4 290.5ZM562.6 286L564.5 285.4L566.8 286L567 288.6L568.3 289.8L570.5 288.1L572.8 287.2L576.9 288.7L579.5 289.6L582.5 290.5L584.5 292.2L586.6 293.5L587.5 294.9L586.2 295.1L587.8 296.8L589.3 298.4L590.8 299.9L592 300.3L590.5 300.6L587.8 300L586.5 299.1L584.8 297.1L582.5 296.2L580.8 297.3L580.3 298.7L577.3 298.5L575 297L572.5 297.4L573.7 295.2L572.8 293.1L569.8 291.7L566.8 290.7L565.2 291L564.9 289L566.4 288.4L563.8 288.1L562.2 286.8ZM588.2 293.2L590.8 292.3L593 291.1L594.2 291.3L593.8 292.6L591.5 294.1L589.3 294.1ZM592 288.7L593.8 289.8L595.3 291.4L594.9 291.7L593 289.8ZM597.7 292.9L599.5 294.6L599.2 295.2L598 294.1ZM600.5 295.3L605 297.1L604.8 297.6L601.3 296.2ZM605.2 298.8L607 299.6L606.7 299.9L605.4 299.6ZM606.7 297.4L607.8 299L607.3 299.1L606.5 297.9ZM611.8 315.6L614 317L616.3 319.1L615.5 319.3L613.3 318L611.8 316.2ZM631.8 311.5L633.7 311.5L633.5 312.6L631.9 312.6ZM634 310.1L635.8 309.4L635.5 310.4L634.2 310.7ZM615.7 307.6L616.6 307.9L616.6 308.7L615.9 308.5ZM579.5 300.9L581 303.7L581.5 306.5L583.8 307.6L584 309.9L585.1 313.5L587 314.5L589 315.9L590.4 319.1L592 321.1L595.2 324L595.6 326L596.2 329.6L595.3 332.9L594.5 335.9L592.8 338.7L591.5 341.8L590.8 345L590.8 345.6L587.8 346.3L585.2 348.6L583.3 347.3L583.2 346.3L582.5 346.9L581 348L578 347.1L576.2 345.9L575.4 343.7L574.3 342L573 342L573.5 340.4L572.5 337.6L572.5 336.4L571.3 338.5L569.7 340.7L568.6 340L567.1 336.9L565.3 335.7L562.3 334.8L559.3 335L555.5 336L552.5 337.3L551 338.9L548.7 338.9L545.8 339.1L542.7 341L539.8 340.6L538.5 339.7L538.3 338.4L539.4 337.8L539.4 335.3L538.3 332.9L537.7 329.9L536.8 327.4L535.6 325.5L536 323.4L536.4 320.3L537 318.3L539 317.5L540.9 316.4L543.7 315.9L546.5 315.1L548.5 313L549.1 312.3L550.2 309.9L551.2 311.2L551.8 309.6L552.5 308L554.5 306.3L556.2 305.7L558 307.6L560.2 307.4L561.1 304.5L562 303.5L564.7 303.1L563.5 301.9L565.3 302.3L568.6 303.2L571.2 303.4L569.7 305.2L569 307.4L571 309L573.5 310.4L575 311.5L577.2 311.5L578 308.3L578.2 304.3L578.8 301.4ZM582.9 351.7L585.5 352.5L588.2 352.1L588.2 354.7L587.7 356.8L586 357.6L584.8 357.4L583.8 355.6L582.9 352.9ZM624.8 339.8L627.2 341.5L628.3 344.2L629.8 345.7L631.5 346.3L633.6 345.9L632.7 348.8L631.2 349.4L631.2 351.3L628.8 353.5L627.8 352.9L628.5 350.4L626.5 349L627.7 347.5L627.8 345.6L627.1 343.7L625.5 341.3ZM624.8 351.3L627.1 352.7L627.2 353.8L625 356.8L625.5 358L622.8 359.3L621.8 362.5L620 364L618.2 364L615.5 362.7L617.2 359.7L619 358.2L622.2 355.8L623 353.9L624 352.1ZM131.8 254.5L132.6 253.9L133.6 255L132.4 255.8ZM130.8 252.7L131.8 252.7L131.3 253.2ZM128.5 251.8L129.3 251.6L129.1 252.1ZM238.4 251.1L242.2 249.1L245.1 249.2L247.3 250.3L250 251.4L252.4 252.6L254.6 253.8L253.3 254.3L249.2 254.4L250 253.2L248.1 252.6L246.1 251.6L244 250.6L241.6 250L239.9 250.8ZM254.1 256.8L257.3 256.5L256.6 255.4L255.7 254.7L258.2 254.5L260.9 254.6L262.1 255.3L263.3 256.4L260.9 256.6L258.7 258L257.4 257L255.1 257.3ZM248.4 256.9L250 256.6L251.5 257.3L250.3 257.7L248.5 257.3ZM265 256.6L267.4 256.7L267.1 257.3L265 257.4ZM273 268.7L274.5 268.5L274.3 269.6L273 269.6ZM248.5 245.9L249.1 245.7L249.6 247.4L248.8 247.2ZM248.9 243.2L250.3 243.6L250 244.1L248.8 243.6ZM276.9 203.4L277.8 201.3L279.7 196.8L282 194.1L282.6 194.1L281.1 197.5L282.6 198.2L285.6 199.6L286.3 201.2L286.8 203.5L286.1 205.5L284.5 205.2L285 203.6L282.1 205.1L281.8 203.4L279.6 203.4ZM269.1 198.2L272.1 198.9L273.2 200L270.6 199.7ZM269.2 205.2L271.3 205.8L272.8 205.9L272.1 206.9L270.1 206.3ZM173.2 196.1L177.9 197.5L179.9 199.8L180.9 201.6L178.3 200.9L175.9 199.1L173.9 197.6ZM166.3 187.9L168.3 187.9L168.1 190.7L169.2 192.9L167.3 191.2ZM161.3 177.2L163.6 176.9L165.8 181.6L167.1 185.1L165.6 185.1L163.6 181.6ZM133.9 179.4L136.3 177.4L137.5 178.6L135.8 180.5ZM108.3 160.8L110.8 159.8L112.6 161.2L110.3 161.8ZM114.8 171L116.8 170.4L117.3 171.9L115.6 172.2ZM118.3 186.4L120.4 185.6L120.6 186.6L118.6 187.2ZM114.1 190L116.3 188.2L116.5 188.9L114.6 190.2ZM112.3 191L113.8 189.5L113.9 190L112.6 191.2ZM103.3 193.2L105.6 192.4L105.6 192.9L103.6 193.4ZM99.6 193.9L101.3 193.2L101.3 193.9ZM624.5 191L626 190.7L625.9 191.2ZM614.4 184.8L615.2 185.6L615.1 186.1L614.5 185.3ZM584 211.6L585.5 210.1L585.2 209.9L583.9 211.2ZM586.3 209.7L589 208L588.7 207.8L586.2 209.3ZM590 207.6L591.5 206.5L591.2 206.3L589.9 207.1ZM593.8 204.7L594.5 203.8L594.2 203.6ZM597.5 199.8L598.3 198.9L598 198.6ZM598.8 197.7L600.1 196.3L599.8 196.1L598.8 197.2ZM268.3 165.7L263.8 164.1L260.8 162.8L257.8 160.5L254.1 157.4L251.1 158.1L248.8 157.1L248.8 155.7L254.8 153.5L255.6 149.8L257.1 146L254.8 142.8L251.1 139.9L248.8 136.5L247.3 134.3L243.6 136.1L239.1 135.7L233.8 133.4L231.6 130.2L231.1 124L232.3 119.4L236.8 117L238.6 119.4L237.1 125.5L239.1 126.4L240.6 121.4L242.8 117.8L245.1 117.8L248.8 122L251.8 123.5L254.8 127.4L258.6 130.2L263.1 133.9L264.6 138.7L266.1 143.2L269.8 146L273.6 149.5L272.1 153.5L269.8 155L267.6 152.8L264.6 149.8L263.8 150.6L265.8 155.7L268.6 160.8L266.1 161.5L263.1 159.7L266.1 163.8ZM189.6 133L193.3 138.7L194.8 142L203.1 141.6L208.3 139.5L213.1 137.4L214.3 135.7L208.8 131.2L207.9 123L203.8 119.9L200.8 122L197.1 122L194.4 119.9L189.1 125L188.8 129.3L192.6 129.8L192.9 132.5L190.3 132.5ZM177.6 126.4L181.2 130.7L185.1 128.8L187.3 124L191.1 119.9L192.6 116.7L189.6 114.5L184.3 113.4L179.1 114.5L179.8 118.8L177.6 122ZM190.3 105.8L194.8 112.3L200.8 111.1L206.8 110.5L207.6 105.2L202.3 99.4L197.8 104.5L194.8 102.7L191.8 100.7ZM181.3 103.3L187.3 106.4L189.6 103.9L191.8 98.1L187.3 95.4L182.8 99.4ZM209.8 108.2L215.1 110.5L219.6 107.6L217.3 100.7L212.8 101.4L210.6 102.7ZM221.1 110.5L224.8 112.8L225.6 108.8L223.3 107ZM221.1 99.4L221.1 107L227.8 112.3L233.8 113.4L241.3 113.1L246.6 111.7L246.6 107L244.3 104.5L236.8 106.4L231.6 102L226.3 102.7L222.6 98.1ZM230.8 101.4L238.3 102.7L245.8 103.3L248.8 98.8L253.3 87.5L251.8 82.1L259.3 77.1L263.8 70.1L272.8 56.2L273.6 50.6L266.8 44.7L256.3 43.4L245.8 44.7L236.8 51.7L228.6 60.4L233.8 69.2L236.8 77.1L234.6 86L232.3 89L230.8 94L231.6 98.1ZM221.8 78L225.6 89L230.8 89.7L234.1 86L234.9 79.6L231.6 71L227.1 62.4L221.8 69.2ZM207.6 89.7L211.3 92.6L216.6 91.9L218.1 86L214.3 81.3L209.8 82.1L207.6 85.2ZM219.1 91.2L222.6 92.6L224.1 89L222.6 84.4L219.6 85.2ZM222.6 121.4L224.4 126.4L228.6 123L230.5 116.7L227.1 115.6L222.9 116.2ZM212.1 122.5L215.8 129.8L220.3 127.9L221.1 123L219.6 118.3L215.1 116.7L212.8 118.3ZM216.6 139.9L219.6 141.8L222.2 140.8L221.8 137.4L219.6 136.1L217.6 137.4ZM235.3 160.2L237.6 161.8L242.1 159.8L245.5 159.8L243.6 158.5L245.5 154.6L239.8 152.1L238.3 151.7L236.8 156.4ZM241.3 162.5L243.1 162.5L242.4 164.1ZM245.4 164.5L246.9 165.1L246.1 166.7ZM249.9 144.8L252.6 145.6L251.8 147.2L250.3 146.8ZM245.8 181.6L247.3 181.3L246.6 183.2ZM242.5 190.5L244.8 190.7L244 191.5ZM354.9 164.5L356.1 164.5L355.6 166.7ZM363.6 169.8L364.4 169.8L363.9 171.9ZM355 176.9L356.5 176.3L355.6 178.3L354.7 179.7ZM352.3 131.2L353.8 130.7L353.1 132.1ZM340.4 240.5L341.5 240.2L341.1 241ZM342.1 240.9L342.7 240.9L342.6 241.4ZM344.1 240L344.9 239.8L345.6 239L344.5 240.9ZM330.1 261.7L330.7 261.7L330.4 262.2ZM430.6 302.2L431.1 302.2L430.9 302.8ZM448.6 317L449.5 317L449.2 317.7ZM451.9 315.6L452.5 315.6L452.2 316.2ZM469 369.4L471.6 369.4L471.2 371L469.3 370.7ZM308.8 381.4L311.8 382.2L312.1 383.5L309.6 382.4ZM504.9 264.4L505.3 264.5L505.2 267.3L504.6 267.3ZM228.6 285.3L229.3 285.1L229.4 286.2L228.7 286.3ZM424.6 293.5L425.1 293.7L425.1 294.4L424.8 294.4ZM378.6 279.2L379.2 279.2L378.9 280ZM555.1 231.8L556.2 231.4L556.2 231.8L555.2 232ZM559.6 229.4L560 229.2L559.8 230.3ZM557.4 244.1L558.2 243L558.1 242.9L557.2 243.7ZM400.3 221.4L402.1 221.9L402.6 223.1L401.1 222.1ZM407.5 226.3L408.1 226.1L407.8 227ZM404.6 220.8L405.7 220.6L405.4 221.2ZM441.4 244.1L441.9 244.1L441.7 244.7ZM448.8 243.2L450.1 242.8L450.1 243L449.1 243.5ZM438.6 138.7L440.1 137.8L441.1 139.9L439.3 141.2ZM453.6 134.8L456.6 133.9L455.8 136.5L454 136.5ZM470.1 119.9L473.1 118.8L473.1 121.4L470.8 121.4ZM575.8 119.4L580.3 117.2L581 119.9L577.3 120.4ZM611 176L612.5 174L612.9 174.9L611.5 176.3ZM571.3 185.3L573.1 185.1L573.1 186.4L571.8 186.4ZM161.1 177.7L163.3 177.4L163.6 179.7L162.4 180.2ZM382.3 185.9L383.8 185.9L383.7 186.6L382.4 186.4ZM390.4 182.4L391.4 179.4L391.3 179.4L390.4 181.6ZM398.6 176L400.3 175.7L400.8 176.3L398.8 177.4ZM399 174.6L400.1 174.6L400.1 175.3L399.1 175.2ZM395.2 170.7L396.2 170.4L396.2 171.3L395.4 171.3ZM385.3 144L387.6 142.4L389.1 140.4L389.8 138.7L388.3 139.9L386.1 142.4ZM391.3 138.7L392.8 137.4L392.5 139.1ZM358.6 187.9L359.4 187.2L359.2 187.9ZM506.4 273.8L506.7 274L506.7 274.6L506.4 274.4ZM523.6 287.2L525 287.2L525.9 289.2L524.8 289.2ZM527.2 288.7L528.1 288.7L528.1 289.6L527.4 289.6ZM511.4 282.7L512.7 283.7L512.4 283.9L511.3 283ZM513.7 286.3L514.8 287.4L514.5 287.5L513.7 286.8ZM534.9 295.2L537 295.2L536.8 295.6L534.9 295.6ZM567.1 293.1L568 293.2L567.9 295L567 294.9ZM562.8 295.6L563.4 295.6L563.2 296.8L562.5 296.7ZM569.2 286L570.2 286.2L570 286.6L569.4 286.5ZM585.7 287.8L586.9 287.8L586.8 288.1L585.7 288.1ZM561.2 302L563 301.9L562.9 302.6L561.4 302.6ZM570.4 305.7L571.2 305.7L571 306.5L570.4 306.3ZM570.7 342.2L573 342.4L572.2 342.9L570.9 342.7ZM581.7 349.6L582 349.8L582 350.6L581.7 350.6ZM587.7 350L588.2 350.2L588.1 351.2L587.7 351ZM617 364.4L618.1 364.6L617.8 365.5L617 365.3ZM100.4 358L101.5 358L101.2 358.7ZM194.1 91.9L199.3 91.2L200.8 94.7L197.1 96.8L194.1 95.4ZM195.6 86.7L200.1 85.2L201.6 89L197.8 89.7ZM221.8 93.3L224.8 94.7L225.6 93.3L223.3 91.9ZM212.1 92.6L215.1 94L215.1 91.9L212.8 91.2ZM206.8 96.1L209.1 97.5L209.1 94L207.6 93.3ZM228.6 94.7L231.6 96.1L231.6 94L229.3 93.3ZM186.6 105.2L189.6 107L189.6 105.2L187.3 104.5ZM208.3 108.8L210.6 110.5L210.6 108.2ZM206.1 118.3L208.6 120.4L208.6 117.8ZM244.3 117.8L248.1 118.3L251.8 121.4L248.8 122.5L245.1 122ZM215.8 75.4L218.1 77.1L217.8 73.7ZM95.8 478.4L125.8 478.4L140.8 465.1L163.3 456.2L185.8 453.4L208.3 448.2L215.8 445.6L230.8 448.2L248.8 448.2L260.8 433.9L272.8 414.3L280.3 408.4L275.8 417.9L272.8 433.9L274.3 453.4L290.8 478.4L313.3 478.4L328.3 459.1L343.3 445.6L358.3 436.2L380.8 433.9L403.3 433.9L418.3 429.7L433.3 423.6L448.3 419.8L463.3 423.6L470.8 429.7L482.8 425.6L500.8 419.8L515.8 417.9L530.8 417.9L545.8 420.9L560.8 418.6L575.8 420.9L590.8 427.6L605.8 433.9L620.8 440.8L613.3 459.1L613.3 478.4L635.8 478.4L635.8 553.9L95.8 553.9Z"/>
<path fill="#aad3df" stroke="#aad3df" stroke-width="0.3" stroke-linejoin="round" d="M407.8 216.3L408.1 213.2L408.9 211.2L410.4 208.6L411.9 205.8L413.8 206L415.3 206.9L414.6 208.3L416.1 210.1L417.6 210.1L418.9 209.1L420.6 208.6L422.1 209.7L423.6 210.5L425.4 212.2L428.1 214.2L428.2 216.1L425.8 217.3L422.8 217.4L420.6 216.7L418.3 215.2L415.3 215.3L413.1 216.7L410.8 217.1L409.3 216.8ZM418.3 208L418.8 206.3L421 205.2L423.1 204.5L424.6 204.3L422.8 206.3L422.4 208L420.9 208.3ZM406.8 218.1L407.8 217.3L409.8 217.8L409 218.4L407.2 218.4ZM439.3 205.4L442.3 204.7L445.3 205.2L445.3 208.4L443.1 208.4L441.2 209.9L442 212.2L444.6 213.8L444.9 216.3L447.2 216.3L447.2 217.5L445 218.6L446.2 220.6L446.6 224L446.6 225.2L443.8 225.7L441.1 224.4L439.1 222.3L439.8 220.2L441.4 218.4L440.1 217.3L438.6 215.3L437.1 213.2L437.1 211.2L436 209.7L437.1 207.6ZM453.1 207.1L454.1 207.1L454.3 209.9L453.4 210.3ZM455.8 205.4L458.1 205.6L457.3 206.9L456.1 206.7ZM476.1 208L477.6 205.6L480.6 205.2L484.3 205.2L484.6 206.3L481.3 206.3L478.3 207.3L477.1 209.1ZM480.1 214.2L482.1 213.6L483.4 214L482.1 215.1ZM521.4 193.9L523 194.5L524.8 192.9L528.2 190L530.5 186.1L530.7 183.8L529.6 183.6L528.7 187.7L526.8 189.7L524.4 191.7L522.4 193.2ZM411.1 171.6L413.1 171.9L415.1 170.1L415 167.6L412.3 166.4L410.8 168.3ZM417.6 168.6L419.5 168.9L420.4 167.3L418.8 163.2L417.6 163.5L418.3 166.1ZM384.4 176L386.1 176.3L386.8 174L385.3 173.4ZM386.9 178L387.7 178L388.2 175.7L387.4 175.7ZM406.3 174.9L407.5 174.6L407.4 176.9L406.8 177.7ZM227.7 205.3L230.8 203L233.1 201.2L233.5 200.5L236.1 200.9L238.4 202.7L238.9 205.8L238.3 205.4L234.7 205.8L234.1 203.7L232.3 205L229.6 205.4ZM234.4 215.9L235.4 215.9L236.4 213.2L236.1 210.9L237.4 209.5L238.6 207.3L236.8 206.9L234.4 208.8L233.8 209.9L234.6 210.5L233.9 213.1ZM238.8 207.3L239.8 206.7L243.6 206.9L245.8 208.4L245.9 209.5L243.4 208.5L243.2 211.6L242.2 213.2L241.9 211.4L239.9 211.9L240.9 209.1L239.4 207.8ZM240.6 215.9L242.8 216.3L245.1 215.3L247.4 213.5L245.4 214L242.1 215.3L241.2 215.3ZM246.1 212.6L247.2 212.7L249.6 212.7L251.5 212.1L251.2 210.8L249.4 211.3L246.8 211.9ZM220.6 197L221.4 194.4L220.3 192.7L219.1 190.2L218.4 188.6L217.4 188.9L217.3 190.5L218.1 192.4L220 194.4L220.3 196.8ZM215.1 194.4L216.2 193.9L216.1 190.7L215.1 191.2ZM217.6 197L218.5 197L217.9 194.4L216.9 194.9ZM190.3 168.6L195.2 167.9L197.8 167L201.6 163.2L200.1 162.5L194.2 164.1L192.6 164.1L191.1 167ZM180.9 155L183.6 156L186.6 153.9L189.6 150.2L186.6 147.9L183.6 148.3L182.1 151L178.6 151.3L181.3 153.2ZM198.9 175.7L202.3 174.6L206.4 174L206.1 173.1L201.6 172.8L199.3 174.6ZM211.6 181.9L213.1 181.9L213.6 177.7L212.1 177.4ZM258.6 151L260.8 151L260.8 148.3L258.6 148.3ZM232.3 199.1L233.5 199.1L233.5 197.7L232.3 197.7ZM196.4 217.7L197.5 217.7L197.5 216.1L196.4 216.1ZM236.8 266.8L237.9 266.8L238.4 268L237.4 267.9ZM257.8 268.5L258.9 268.5L259.3 270.5L257.9 270.8ZM260.8 308.2L261.9 308.2L262.8 309.7L261.6 309.9ZM271.3 332.7L272.4 332.7L272.4 333.6L271.3 333.6ZM413.5 286.3L414.6 284.5L416.1 284.2L417 285.3L416.8 286.6L416.1 288.3L415.3 288.7L414.1 288.6L413.5 288.3ZM409.6 289.9L410.4 289.9L410.6 293.1L412 296.1L412.5 297.9L411.6 297.9L410.1 294.6L409.6 291.6ZM416.6 299.1L417.6 299.3L418.3 302.9L418.6 306.3L417.7 306.3L417.2 302.9L416.8 300.6ZM419.8 278L420.2 278L420.7 280.9L420.1 281ZM411.4 283.1L412.9 281.3L412.8 281.2L411.2 282.8ZM429.4 222.3L431.1 222.3L431.1 221.4L429.7 221.4ZM433.3 224.6L434.5 224.6L434.4 222.7L433.5 222.7Z"/>
<path fill="none" stroke="#bba9ba" stroke-opacity=".85" stroke-width=".55" stroke-linejoin="round" d="M154.3 137.2L154.3 170.7L157.3 171.6L159.6 174.9L161.1 173.4L162.6 172.5L164.8 174.9L166.3 177.7L167.8 180.2L168.1 181.3L170.8 183L170.8 185.1M181.3 200.2L223.1 200.2L223.9 200.9L227.8 201.8L231.6 202.5L238.6 205.2L239.1 205.9L240.6 207.3L242.1 208.4L242.2 213.2L241.2 215.1L242.1 215.9L247.3 213.6L247.2 212.4L251.1 211.2L253.3 209.1L258.6 209.1L259.6 208.4L260.8 205.8L262 203.8L263.8 204.1L264.1 207.3L264.7 208.6L265.3 209.3M190.2 233.2L193.8 232.8L199.3 235.3L203.5 235.3L203.5 234.4L206.1 234.4L209.1 238.3L211.3 239.3L212.4 237.8L214.3 238.5L216.6 241.9L217.3 243.7L220 244.6M227.5 262.7L227.8 261.6L228.2 260.3L230.2 260.3L229.4 258.6L229.3 257.7L232 257.7L232 260.5L232.4 260.6M232 257.7L233.4 256.7M230.7 263.9L231.7 263L232 262.2L233.5 260.9M231.7 263L233.8 263.7L234.1 264.5M234.7 265.1L235.8 263.9L237.2 263.7L238.6 262.3L241 262M237.2 268L238.8 268.2L240.2 268.4M241.4 272.6L241.4 270.5M258.9 267L257.1 269L257.1 271.2L257.8 273.5L260.1 274.3L261.6 275.6L264.6 275.5L264.9 279.7L265.3 283M265.3 283L267.6 283.6L269.8 282.4L269.8 278.8L271.8 278.8L274.8 277L273.9 275.8L275.8 272.3M274.8 277L276.1 278.2L276 281.3L277.6 283L280.3 281.8L281.1 281.9M280 275.8L279.9 277.3L278.8 278.8L281.1 281.9L284.1 281.3L286.5 281.5L288.4 278.5M284.8 276.1L284.1 278L284.1 281.3M265.3 283L261.1 283.1L261.6 285.6L260.8 291.1L256.4 288.4L253 285L249.6 284.2L247.6 282.7M253 285L252.6 287.1L248.4 289.9L247.3 292.3L245.4 289.9M260.8 291.1L256.3 293.1L254.8 296.1L256.4 299L260.1 299.1L259.9 301.4L261.6 301.4L262.8 303.9L262 308L261.6 311.5L260.4 312.9M261.6 301.4L267.9 299.6L267.9 302.2L269.4 303.7L273.1 305.2L275.4 305.5L275.5 309.6L278.4 309.6L278.4 311.2L279.6 312.6L278.6 315.1L279.1 315.6L279 318.8L282.4 319.1L282.7 321.9L284.4 321.9L283.9 324.5M278.6 315.1L277.1 314.3L273.2 314.8L271.9 319L269.4 319.9L268 318.8L266.4 318.3L265 319.9L263.5 317.8L263.1 314.6L261.6 311.5M271.9 319L274.3 321.6L277.9 323.5L279.4 324.2L277.9 327.4L281.8 327.4L283.9 324.5L285.1 325.2L285.1 327.2L282.1 329.1L279.4 332.4L282 333.8L284.8 335.3L285.7 338.5M279.4 332.4L278.5 336.4L278.2 339.1M265 319.9L265.3 320.3L263.2 322.7L263.1 326.9L261.2 329.4L260.8 333.8L260.8 337.3L260.2 341.8L259.3 345.6L259.3 348.4L258.1 353.3L258.2 358.4L258.6 362.7L257.1 368.2L255.9 371.7L257.4 374L257.8 376.4L263.2 377.3M262.9 378.1L262.9 383.7M362.5 228.5L363.2 231.4L364 233.6L360.6 235.8L357.6 238.3L352.8 239.8L352.8 242.2L358.6 246.1L367.6 252.4L370.8 255.8L372.1 255.6L374.8 254.5L383.8 248.5L380.8 246.9L380.1 243.9L380.7 240.2L380.1 237.2L379.3 234.1L377.1 230.9L378.1 229.2L378.7 225.2M352.8 241.6L346 241.6M352.8 242.2L352.8 244.4L347.8 244.4L347.8 248.7L346.3 249.3L346.3 252.1L340.3 252.1M358.6 246.1L356.1 246.1L357.6 259.7L357.9 261.3L350.8 261.4L348.6 261.1L347.5 262.3L344.1 259.5L341.1 260.3M347.5 262.3L348.7 266.1L345.2 265.7L340.8 266.1M340.6 264.2L343.3 263.9L345.1 264.5L343.3 264.7L340.6 265M345.2 265.7L345.2 267.1L343.3 268.4M348.7 266.1L352.3 266.1L353.8 269.3L357.6 269.1L358 267L359.8 264.7L362.8 263.3L366.1 262L371.1 261.4L372.1 259.1L372.1 255.6M345.9 271.2L348.6 269.7L350.4 272L351.7 273.7L353.2 273.4L353.8 269.3M348.6 274.4L350.4 272M354.6 278.2L353.2 275.2L353.2 273.4M357.6 269.1L361.6 270.2L361 275L361.2 277.1M361.6 270.2L361.6 268.2L365.8 268L366.6 272L367.6 275.6M365.8 268L367.2 268.2L368.2 271.2L368.2 275.5M367.2 268.2L369.4 266.4L371.2 267.1L369.9 271.2L369.9 275.2M366.1 262L367.3 264.7L369.4 266.4M371.2 267.1L371.8 264.4L376.3 265.1L380.8 264.7L386.2 264.1L389.1 259.1L389.1 252.6L388.3 249.3L383.8 248.5M388.3 249.3L401.8 255L401.8 254.2L403.3 254.2L403.3 251L403.3 234.8M403.3 251L421.1 251M380.1 237.2L381.2 234.6L383.1 232.1M386.2 264.1L387.1 265.9L386.1 268.2L383.8 271.9L382.3 274.9L379.3 276.5L378.6 277.9M387.1 265.9L388.3 268.2L389.1 269.9L386.8 270.5L388.6 273.5L393.6 272.8L396.6 270.8L400.1 268.2L398.8 265.4L400.3 260.9L401.8 260.9L401.8 255M388.6 273.5L387.6 277.3L389.8 281.5L393.7 279.5L393.7 278.3L399.6 278.5L403.3 277.3L406.9 277.1L404.1 273.8L401.4 271.5L400.1 268.2M401.4 271.5L403.3 269.3L407.8 270.6L410.8 269.3L414.4 267L415.6 269L416.8 270.5L415.3 272.8L418.3 276.5L416.8 278.5L412.3 279.2L412 279.5L410.1 278L406.9 277.1M416.8 270.5L418.3 267.4L420.4 263L421.3 258.9L423.7 257.3M420.4 263L424.3 262.7L427.3 264.4L429.4 265.9L430.5 265.6M429.4 265.9L428.5 268.2L430.3 268.2L429.9 268.8L431.8 271.2L436.3 272.8L437.8 272.8L433.3 277.3L428.8 278.5L427.3 278.9L427.3 286L428.2 287.4M427.3 278.9L425.1 279.7L419.8 278.1L418.3 276.5M416.8 278.5L417.6 283.1L416.8 284.5L416.8 286.3L422.2 289.3L424.6 291.9M412 279.5L412.8 281.5L410.4 284.6L410.2 286.9L411.6 286.5L416.8 286.3M411.6 286.5L412 288.4L411.6 289.8L409.8 291.4M410.2 286.9L409.3 288.9L409.8 291.4M409.3 288.9L412 288.4M412.3 297.7L415.1 299L416.8 299.1M418.1 302.2L422.8 301.9L426.4 300.6M412.3 297.7L408.6 297.6L408.4 299.1L408.9 302.9L410.5 303.2L410.5 305.1L407.8 303.5L404.1 302.2L401.8 301.4L401.8 304.5L398.8 304.5L398.8 301.4L399.2 300.6L398.5 295.8L395.1 295.3L392.1 296.8L390.7 293.7L385.3 293.7L384.2 293.8M398.8 304.5L398.8 309.4L400.9 311.6L403.8 311.9L406.3 312.1L409.1 309.1L411.4 308.5M383.5 311.2L386.8 311.3L393.6 311.3L400.9 311.6M397.3 312.7L397.3 318.6L395.8 318.6L395.8 323.2L395.8 329.3L392.1 329.8L390.6 329.6M395.8 323.2L397.3 326.6L400.3 324L404.1 324.7L406.3 321.2L409.9 319L407.4 316.2L403.8 311.9M409.9 319L412.8 319.3L414.6 317.5L415.1 314.6L415.3 310.7L413.1 309.4L411.4 308.5L411.4 307.6L415.6 306L414.9 305.4L415.3 302.9L415.8 299.3M417.7 302.3L419.5 306.8L419.5 309.1L418.8 310.8L417.4 309.6L417.6 306.8L415.6 306M412.8 319.3L413.8 322.7L413.8 326.6L415.1 326.6M406.3 331.3L408.6 329.6L409.9 331L408.2 333.1L406.3 331.3M412.3 325.2L413.8 325.2L413.8 327.2L412.3 327.2L412.3 325.2M380.5 281.3L382.8 281.5L385.8 281.5L387.6 281.5L389.8 282.2L389.8 281.5M380.5 283.3L382.8 283.3L382.8 281.5M385.8 281.5L387.4 282.8L387.4 285.6L387.4 287.8L384.6 288.3L383.2 289.3L382.4 290.7M393.7 279.5L392.5 284.8L390.1 287.8L389.8 290.1L388.6 291.3L387.4 292L385.3 291.7L384.1 293.5M417.2 235.3L418.1 238.5M352.4 215.5L353.5 215.3L355.9 215.5L356.5 216.1L355.4 217.3L355.3 219.8L354.6 220L355.3 222.7L354.7 224.6M363.1 212.5L365.1 213.6L366.9 213.6L368.5 214.4L370.6 214.4M369.6 195.3L372.1 197.9L373 197.9L374.5 199.1L375.4 199.1L378.1 200.2L377.2 203.4L374.8 206.5L376.3 207.1L375.7 208.8L376.3 210.7L377.1 211.6M370.9 194.6L373.3 194.6L374.8 196.1L374.8 193.7L376.3 192.7L376.6 190.2M374.8 196.1L374.9 197.7L374.5 199.1M378.7 185.9L380.7 186.1M387.1 188.4L387.7 191.9L387.9 195.6L388.3 195.8L383.9 197.2L386.5 200.7L385.3 203.6L381.6 203.6L380.2 203.6L377.2 203.4M388.3 195.8L391.2 197L394 199.1L399.7 200L401.8 196.8L401.2 193.2L401.6 188.4L401.1 188.2L400 187.2L395.2 187M400 187.2L397.3 184.8M401.1 188.2L404.5 185.9L405.7 183.8L397.4 182.7M405.7 183.8L408.1 182.4L406.9 178.8L402.4 177.7M406.9 178.8L407.8 173.1M408.1 182.4L412.3 185.6L414.9 189.7L413.5 192.9L411.7 194.9L401.2 194.1M413.5 192.9L419.1 195.6L419.2 197L425.8 198.9L425.5 202.7L423.1 204.5M399.7 200L399.1 201.6L400.1 202.5L405.7 201.8L408.1 208L410.4 208.6M405.7 201.8L409.6 202.7L410.8 206L408.1 208M386.5 200.7L391.2 201.2L391.6 202.5L394 203L399.1 201.6M391.2 201.2L394 199.1M391.6 202.5L389.9 205L386.4 205.8L384.1 204.7L381.6 205L380.2 203.6M381.6 205L379.3 206.9L376.3 207.1M386.4 205.8L386.4 207.6M386.2 208L388.8 208L390.6 205.8L389.9 205M390.6 205.8L394 207.1L396.2 206.7L398.8 203.4L400.1 202.5M396.2 206.7L398.1 209.5L399.9 210.7L404.1 211.8L406.3 210.9L408.7 211.8M399.9 210.7L399.4 214.7L400.3 216.7L405.2 215.9L405.7 216.7L405.4 217.5M405.2 215.9L407.8 215.3M395.8 219.8L397.3 217.5L400.3 216.7M394.9 215.5L396.6 214.9L396.7 217.1L397.3 217.5M396.6 214.9L399.4 214.7M389.5 208.6L394.3 209.1L394.9 209.3L394.6 212.2L393.6 214.2L392.2 213.2L389.8 211.2L389.5 208.6M394.9 209.3L398.1 209.5M394.6 212.2L396.6 214.9M382.4 174.6L384.6 168.6L384.1 162.2L386.8 157.1L388.3 151L390.6 144L393.1 142L396.6 139.5L401.4 146L402.1 152.4M396.6 139.5L400.3 141.2L404.4 139.9L404.8 135.7L407.8 135.7L409.3 139.5L412.1 136.5M407.5 170.1L410.8 165.4L413.1 162.5L410.8 158.8L410.8 152.8L409.3 147.9L410.8 145.2L408.6 143.2L409.3 139.5M354.9 185.6L353.5 186.9L356.4 187.9M420 226.9L420.9 225.5L422.8 225.4L429.2 224.6L433 224.6L431.8 220.4L433 219.8L431.4 219L431.1 217.1L428.1 216.3M425.8 212.4L429.6 212.8L432.6 213.8L435.4 215.5L437.5 216.9L438.7 215.7M431.1 217.1L433.3 216.7L435.4 215.5M433.3 216.7L434.8 220.2L435.6 221.4L437.8 219.8L439.1 222.3M433 219.8L435.6 221.4M429.2 224.6L427.6 229.1L424 231.6L421 233.6L419.4 232.8L419.1 235L418.3 238.5M419.4 232.8L419.2 231.8L420.7 230.2L419.8 229.4M424 231.6L424.6 233.9L421.3 235L422.8 236.7L422.1 237.6L419.8 239L418.3 238.6M424.6 233.9L428.8 235.7L432.9 239L435.6 239.1L437.1 239.5L438.4 240.2M435.6 239.1L437.4 237.4L437.8 237.8M433 224.6L434.8 227.2L433.9 230.5L437.5 234.4L438.6 237.6M430 259.9L430.8 258.1L433.9 258.4L436.3 258.9L438.1 257L443.8 255.8L448.3 254.2L449.2 251L448.6 249.8L444.7 249.5L443.2 247.4M443.8 255.8L445.5 259.5M448.6 249.8L449.5 247.4L450.2 246.2M442 246.5L442.6 246.7M446.6 224.4L449.8 222.9L454.8 224L457.6 225.7L457.6 227.6L456.7 231.2L457.1 235L458.5 235.8L457.1 237.9L460 242.4L460.6 243.4L458.2 245.7M457.1 237.9L465.2 237.8L465.4 236L469.8 234.3L470.8 231.8L472.4 230.3L473.2 226.1L478.2 224.6M457.6 227.6L462.6 226.3L465.6 224.2L467.8 225L473.1 222.5L473.2 225.4L478.2 224.6L482.5 227.8M468.1 248.2L472.3 247L470.8 243.4L471.4 241L475.2 239.3L477.6 235.8L477.4 232.7L481.2 229.2L482.5 227.8L484.2 230L483.9 235L487.3 237.2L497.9 241.2L499 240.9L499.3 242.2L503.8 241.4L511.8 240.5M485.9 239.7L487.3 237.2M485.9 239.7L490.8 242L494.5 243.4L497.9 243.7L497.9 241.2M499 242.5L500.5 243.2L503.8 243L503.8 241.4M499.3 251.4L499 247.7L498.1 244.7L500.5 245.6L504.4 246.1L502.6 248.2L504.2 249L504.7 252.1L504.2 253.1M504.7 252.1L505.8 247.7L507.9 245.4L510.1 242.2L511.8 240.5L513.9 241.7L513.5 247.5L512.2 247.9L514.6 250.8L517.6 252.2L516 253.5L512.8 254.6L511.9 256.6L514.2 259.9L513.1 261.9L514.6 265.7L514.6 267.3L513.7 269.7M517.6 252.2L519.1 250.3L519.5 251.4L523.2 253.9L521.7 255.3L523.6 256.4L527.2 260.2L527.2 262.5L527 266.2L524.5 267.3L522.4 269.1M516 253.5L516.7 255L517.8 255L517.3 258L519 257L521.8 256.9L523 258.3L524.2 261.4L523.6 263.1L520.3 263.3L519.4 264.2L520.2 267.1M523.6 263.1L527.2 262.5M519.1 250.3L521.7 250L523.8 248.8L525.9 251L527.8 251.8M516 275.2L517.5 276.2L519 275.5M530.2 281.8L530.8 283.3L533.5 283.3L535.3 282.5L538 282.7L538.6 280.6L539.2 278.6L542.2 278.5M537 277.9L538 278.3L538.5 277.4M577.3 288.7L577.3 298.5M552 299L553.3 298.2L553.6 299.1M439.6 206L438.4 203.8L436.8 203L435.6 201.6L436.3 199.8L436 199.6L438.4 198.4L439 196.5L442 193.9L445.9 194.4L447.7 195.6L449.8 195.8L452.5 195.3L453.7 195.6L455.1 196.8L457.9 196.1L458.2 194.9L455.8 193.2L457.3 190.7L457.6 188.4L463.3 187.2L468.1 185.6L472 184.8L472.3 187.7L476.1 188.2L476.8 189.2L480.6 187.7L482.7 190L485.8 196.1L490.9 195.6L493.8 198.9L496.8 199.8L497.5 199.8L500.4 198.4L504.4 196.1L507.1 196.5L511.8 198.4L513.2 196.8L514.2 192.9L519.1 194.9L519.2 196.5L525.9 197.2L528.5 199.6L531.9 199.8L535 199.1L537.2 197.2L540.9 198.4L542.5 199.1L544.8 197.2L546.9 191.9L546.9 190L551.2 189.5L554.8 191.2L557 197.5L561.7 200.5L561.9 203.2L567.9 201.8L566.8 204.3L565.5 208.8L563.5 208.4L562.3 209.5L562.8 212.4L561.7 214.4M497.5 199.8L499 202.3L502.2 205L502.2 208.6L506.1 209.3L508.9 210.5L510.4 213.8L518.5 214.2L523.3 216.1L530 214.2L533.7 211.8L533.5 209.1L536.2 209.5L541.9 206L545.7 205.4L539.2 202.7L539 202.3L542.5 199.1M552.4 219.4L556.2 215.7L558 215.3L560.4 214.4L561.7 214.4M555.9 223.5L558.4 221.9M496.8 199.8L494.5 201.6L494.1 204.5L490.3 204.3L489.2 208L485.8 209.1L487 212.8L486.1 214.9L481.2 217.3L476.5 219.6L478.2 224.6M486.1 214.9L484.3 213.6L479.4 213.2L476.1 214.4L472.3 214L472.2 214.7L467.8 217.3L465.7 216.9L464.8 213.4L457.3 210.5L453.7 207.8L449.8 209.1L449.8 216.7L451.3 216.7L453.7 213.8L455.8 214.9L458.6 217.1L462.6 221.4L465.6 224.2M449.8 216.7L448.1 215.5L444.6 215.7M467.8 217.3L471.6 218.8L473.4 219.2L476.5 219.6M467.5 220.2L471.6 220L476.5 220.2M467.5 220.2L468.2 222.5L467.8 225M472.2 214.7L473.1 216.7L475.3 217.7L473.4 219.2"/>
</g></defs>
<use href="#world" x="-540"/><use href="#world"/><use href="#world" x="540"/>
</svg>
</div>
<div id="track"></div>

<!-- layer/group card -->
<div class="card" style="left:5.5px;top:65.600px;width:162px;height:42.400px"></div>
<div class="abs" style="left:5.5px;top:78.800px;width:162px;height:.7px;background:#e3e3e3"></div>
<div class="t" style="left:13.3px;top:87.600px;font-size:8.2px;color:#333">Layer</div>
<div class="plus" style="left:37.300px;top:84.400px"></div>
<div class="t" style="left:121.3px;top:87.600px;font-size:8.2px;color:#333">Group</div>
<div class="plus" style="left:146.800px;top:84.400px"></div>
<!-- toolbar -->
<div class="card" style="left:171.200px;top:65.400px;width:155.300px;height:19.700px;border-radius:5px"></div>
<svg class="ic" style="left:175.200px;top:70.900px" width="8.600" height="8.600" viewBox="0 0 24 24"><path d="M12 8c-2.210 0-4 1.790-4 4s1.790 4 4 4 4-1.790 4-4-1.790-4-4-4zm-7 7H3v4c0 1.100.9 2 2 2h4v-2H5v-4zM5 5h4V3H5c-1.100 0-2 .9-2 2v4h2V5zm14-2h-4v2h4v4h2V5c0-1.100-.9-2-2-2zm0 16h-4v2h4c1.100 0 2-.9 2-2v-4h-2v4z"/></svg>
<svg class="ic" style="left:192.100px;top:70.800px" width="8.600" height="8.600" viewBox="0 0 24 24"><path d="M19 8H5c-1.660 0-3 1.340-3 3v6h4v4h12v-4h4v-6c0-1.660-1.340-3-3-3zm-3 11H8v-5h8v5zm3-7c-.55 0-1-.45-1-1s.45-1 1-1 1 .45 1 1-.45 1-1 1zm-1-9H6v4h12V3z"/></svg>
<svg class="ic" style="left:208.900px;top:70.700px" width="8.600" height="8.600" viewBox="0 0 24 24"><rect x="4" y="2.500" width="4.600" height="7.500"/><rect x="15.400" y="2.500" width="4.600" height="7.500"/><path d="M2 12.500h2.800v3h14.400v-3H22v9h-2.800v-3H4.800v3H2z"/></svg>
<svg class="ic" style="left:225.900px;top:70.800px" width="8.600" height="8.600" viewBox="0 0 24 24"><path d="M21.990 4c0-1.100-.89-2-1.990-2H4c-1.100 0-2 .9-2 2v12c0 1.100.9 2 2 2h14l4 4-.010-18zM18 14H6v-2h12v2zm0-3H6V9h12v2zm0-3H6V6h12v2z"/></svg>
<div class="abs" style="left:241.200px;top:67.800px;width:79.800px;height:14.900px;border:0.8px solid #46566a;border-radius:7.5px;background:#fff"></div>
<div class="t" style="left:271px;top:72.300px;font-size:6.300px;color:#5b6b7a;letter-spacing:.2px">Search</div>
<svg class="abs" style="left:306.200px;top:70.600px" width="9.600" height="9.600" viewBox="0 0 24 24"><path fill="#333" d="M15.500 14h-.79l-.28-.27C15.410 12.590 16 11.110 16 9.500 16 5.910 13.090 3 9.500 3S3 5.910 3 9.500 5.910 16 9.500 16c1.610 0 3.090-.59 4.230-1.570l.27.28v.79l5 4.990L20.490 19l-4.990-5zm-6 0C7.010 14 5 11.990 5 9.500S7.010 5 9.500 5 14 7.010 14 9.500 11.990 14 9.500 14z"/></svg>
<!-- zoom controls -->
<div class="card" style="left:5.300px;top:310px;width:15px;height:46.500px;border-radius:2.500px"></div>
<div class="abs" style="left:5.300px;top:325.200px;width:15px;height:.6px;background:#e2e2e2"></div>
<div class="abs" style="left:5.300px;top:340.600px;width:15px;height:.6px;background:#e2e2e2"></div>
<div class="abs" style="left:9.600px;top:316.700px;width:6.400px;height:1.600px;background:#222"></div>
<div class="abs" style="left:12px;top:314.300px;width:1.600px;height:6.400px;background:#222"></div>
<div class="abs" style="left:9.900px;top:332.400px;width:5.800px;height:1.300px;background:#222"></div>
<svg class="abs" style="left:10.500px;top:343.500px" width="4.600" height="9" viewBox="0 0 10 20"><path d="M5 0l5 10H0z" fill="#333"/><path d="M5 20l5-10H0z" fill="#c9c9c9"/></svg>
<div class="t" style="left:26.200px;top:313.500px;font-size:7.400px;color:#1a3a66;letter-spacing:.1px;-webkit-text-stroke:.2px #1a3a66">Map Type</div>
<div class="abs" style="left:26.300px;top:325.800px;width:31px;height:30.800px;border:0.7px solid #3d5f86;border-radius:4px;background:#aad3df;overflow:hidden">
<svg class="abs" style="left:0;top:0" width="30" height="30" viewBox="220 100 293 293" preserveAspectRatio="none"><use href="#world"/></svg></div>
<!-- converter panel -->
<div class="abs" style="left:570.500px;top:68.500px;width:192px;height:17px;background:#ecf5f8;border-radius:6px 6px 0 0"></div>
<div class="abs" style="left:570.500px;top:85px;width:188px;height:236.500px;background:#fff"></div>
<div class="abs" style="left:574px;top:85px;width:184.500px;height:217px;background:#fff"></div>
<div class="abs" style="left:574px;top:302.400px;width:184.500px;height:8px;background:#f1f1f1;border-bottom:.8px solid #d5d5d5;border-radius:0 0 2px 2px"></div>
<svg class="abs" style="left:573.600px;top:72.300px" width="8" height="8" viewBox="0 0 24 24"><path fill="#7d858c" d="M12 6v3l4-4-4-4v3c-4.420 0-8 3.580-8 8 0 1.570.46 3.030 1.240 4.260L6.700 14.800c-.45-.83-.7-1.790-.7-2.800 0-3.310 2.690-6 6-6zm6.760 1.740L17.300 9.200c.44.84.7 1.790.7 2.800 0 3.310-2.690 6-6 6v-3l-4 4 4 4v-3c4.420 0 8-3.580 8-8 0-1.570-.46-3.030-1.240-4.260z"/></svg>
<div class="t" style="left:583.300px;top:72.200px;font-size:7.900px;color:#1f3557;letter-spacing:.1px">Converter</div>
<div class="abs" style="left:624.600px;top:70.300px;width:11.400px;height:11.400px;border-radius:50%;background:#e8121d"></div>
<div class="abs" style="left:627.100px;top:73.700px;width:6.400px;height:4.600px;border-radius:1.300px;background:#fff"></div>
<svg class="abs" style="left:629.300px;top:74.700px" width="2.400" height="2.600" viewBox="0 0 10 10"><path d="M0 0l10 5L0 10z" fill="#e8121d"/></svg>
<div class="t" style="left:663.300px;top:73.300px;font-size:6.100px;color:#2b2b2b;letter-spacing:.14px">Conversion Left - 2 GB</div>
<svg class="abs" style="left:731.400px;top:69.200px" width="13.400" height="13.400" viewBox="0 0 24 24"><path fill="#222" d="M7.410 15.410L12 10.830l4.590 4.580L18 14l-6-6-6 6z"/></svg>
<svg class="abs" style="left:747.600px;top:70.400px" width="11" height="11" viewBox="0 0 24 24"><path fill="#222" d="M19 6.410L17.590 5 12 10.590 6.410 5 5 6.410 10.590 12 5 17.590 6.410 19 12 13.410 17.590 19 19 17.590 13.410 12z"/></svg>
<!-- dashed box -->
<svg class="abs" style="left:0;top:0" width="768" height="432" viewBox="0 0 768 432"><g fill="none" stroke="#94989d" stroke-width=".9" stroke-dasharray="2 1.600"><path d="M584.800 85.500V236.300H748.900V85.500"/><rect x="621.800" y="244.800" width="90.400" height="46.400"/></g></svg>
<div class="abs" style="left:644.300px;top:84.800px;width:45px;height:16px;background:#0c3566;border-radius:4.500px"></div>
<div class="t c" style="left:666.800px;top:88.200px;font-size:7.300px;font-weight:bold;color:#fff;letter-spacing:.55px">Browse</div>
<div class="abs" style="left:600px;top:109.600px;width:133px;height:31.400px;background:#dddddd;border-radius:8px"></div>
<svg class="abs" style="left:623px;top:120.800px" width="8.800" height="9.400" viewBox="3 1.500 18 21"><path fill="#2aa3b0" d="M14 2H6c-1.100 0-1.990.9-1.990 2L4 20c0 1.100.89 2 1.990 2H18c1.100 0 2-.9 2-2V8l-6-6z"/><path fill="#bfe6ea" d="M13 3.500V9h5.500z"/></svg>
<div class="t" style="left:636px;top:121.900px;font-size:7.300px;color:#333;letter-spacing:.1px">JAPAN.gml</div>
<div class="fmt"><b>Supported GIS Formats :-</b><br>GML, KML, KMZ, GeoJSON, TopoJSON,<br>GPX, GPS, GPKG, XLSX, ODS, MAPINFO,<br>SQLITE, CSV, ESRI SHAPEFILE, DXF, MID,<br>MIF, PDF, TIFF</div>
<div class="btn" style="left:621px;width:46px;background:#5aa51e">Upload</div>
<div class="btn" style="left:673px;width:39px;background:#fbb62f;color:#fff4d6">Reset</div>

<svg class="abs" style="left:651.300px;top:249.500px" width="30.600" height="17" viewBox="0 0 28 16"><path fill="#c9cbd0" d="M6.500 15.500C3 15.500 .8 13.400 .8 10.800c0-2.400 1.800-4.300 4.200-4.600C5.800 3 8.600 .8 12 .8c3.200 0 5.900 1.900 7 4.600.5-.1 1-.2 1.500-.2 3.300 0 6 2.300 6 5.200s-2.700 5.100-6 5.100z"/></svg>
<div class="t" style="left:657.800px;top:255.600px;font-size:6.600px;font-weight:bold;color:#1d3f7c;transform:scaleX(.68);transform-origin:0 0">MAP<span style="color:#f3c623">OG</span></div>
<div class="t c" style="left:666.500px;top:272.500px;font-size:7.300px;color:#74a452;letter-spacing:.52px">Select Recent File</div>
<div class="step" style="top:321.500px;height:18px"><i style="top:3px">2</i><span style="top:6.400px">Select Output Format</span></div>
<div class="step" style="top:342px;height:18.700px"><i style="top:3.400px">3</i><span style="top:6.800px">Download &amp; Publish</span></div>
<div class="abs" style="left:570.500px;top:339.300px;width:187.500px;height:2.500px;background:#f7f9f5"></div>
<!-- scrollbar thumb -->
<div class="abs" style="left:759.400px;top:192px;width:3.700px;height:168px;background:#0b3a66;border-radius:2px"></div>
<div class="abs" style="left:758px;top:86px;width:1.400px;height:275px;background:#fff"></div>
<!-- cursor -->
<svg class="abs" style="left:644.500px;top:223px" width="8" height="10.500" viewBox="0 0 16 21"><path fill="#fff" stroke="#222" stroke-width="1.300" stroke-linejoin="round" d="M5 1.200c.9 0 1.500.7 1.500 1.500V9l.8-.1c.3-.9 2-.9 2.200.2.500-.7 2-.5 2.100.4.700-.5 1.900-.1 1.900 1v4.500c0 1.500-.5 2.300-1 3.200V20H5.500v-1.600C4 16.800 2.600 14.600 1.300 12.700c-.6-1 .6-2 1.600-1.100l.9.900V2.700c0-.8.500-1.500 1.200-1.500z"/></svg>
<!-- chat -->
<div class="abs" style="left:724px;top:351.600px;width:32px;height:32px;border-radius:50%;background:#0aa653;box-shadow:0 1px 2px rgba(0,0,0,.25)"></div>
<svg class="abs" style="left:730.700px;top:358.500px" width="18.600" height="18.600" viewBox="0 0 34 34"><path fill="#fff" d="M17 3C9.300 3 3 8.600 3 15.500c0 4 2.100 7.500 5.400 9.800L8 31l5.600-3.400c1.100.3 2.200.4 3.400.4 7.700 0 14-5.600 14-12.500S24.700 3 17 3z"/><path fill="none" stroke="#0aa653" stroke-width="2" stroke-linecap="round" d="M11.500 19c3 3 8 3 11 0"/></svg>
<!-- attribution -->
<div class="abs" style="left:669px;top:379.700px;width:51px;height:11.600px;border-radius:6px;background:#fff"></div>
<div class="abs" style="left:672px;top:382px;width:7px;height:7px;border-radius:50%;background:#111;color:#fff;font-size:5.500px;font-weight:bold;text-align:center;line-height:7px;font-family:'Liberation Serif',serif">i</div>
<div class="t" style="left:679.600px;top:381.900px;font-size:7.300px;color:#222">Attribution</div>
<!--UI-->
</div>
</body></html>
